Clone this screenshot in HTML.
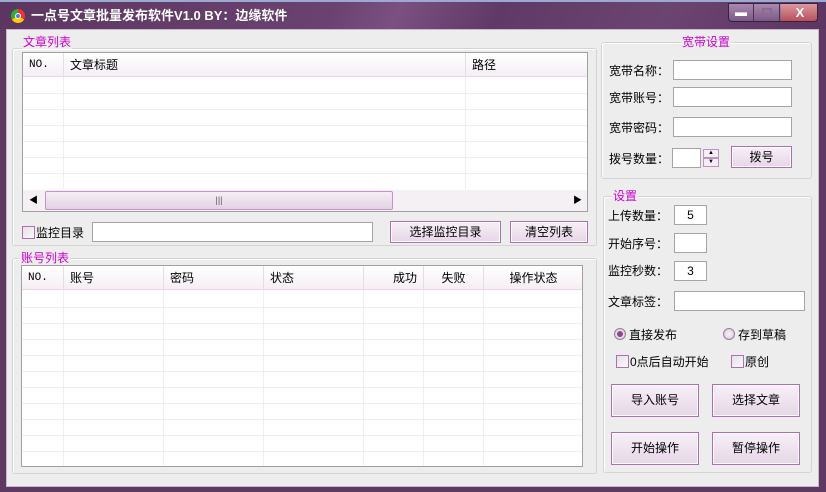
<!DOCTYPE html>
<html><head><meta charset="utf-8"><style>
*{box-sizing:border-box;margin:0;padding:0}
body{width:826px;height:492px;overflow:hidden;background:#5e3a62;font-family:"Liberation Sans","Noto Sans CJK SC","WenQuanYi Zen Hei",sans-serif;font-size:12px;color:#000;position:relative}
.a{position:absolute}
.title{left:0;top:0;width:826px;height:29px;background:linear-gradient(115deg,#5c3660 0%,#6a4270 40%,#7a5080 48%,#603a66 60%,#6b4570 80%,#5c3660 100%);border-top:2px solid #9aaad0}
.client{left:6px;top:29px;width:813px;height:458px;background:#ededed;border:1px solid #c9b7cc}
.grp{position:absolute;border:1px solid #d4d4d4;border-radius:3px;box-shadow:inset 1px 1px 0 #fff}
.lbl{position:absolute;color:#d000d0;background:#ededed;padding:0 1px;font-size:12px;line-height:14px}
.inp{position:absolute;background:#fff;border:1px solid #a5a5a5;text-align:center;line-height:18px}
.btn{position:absolute;border:1px solid #b070b0;background:linear-gradient(#f7f0f7,#e6d6e6);text-align:center;box-shadow:inset 0 0 0 1px #fff;font-size:12px}
.list{position:absolute;background:#fff;border:1px solid #a0a0a0;overflow:hidden}
.hd{position:absolute;top:0;height:24px;line-height:24px;background:linear-gradient(#fff,#f5eff5);border-right:1px solid #e6dce6;border-bottom:1px solid #ecd6ec;padding-left:6px;font-size:12px}
.vl{position:absolute;width:1px;background:#efefef}
.hl{position:absolute;height:1px;background:#efefef;left:0;right:0}
.t{position:absolute;font-size:12px;line-height:14px;white-space:nowrap}
.cb{position:absolute;width:13px;height:13px;border:1px solid #b070b0;background:linear-gradient(135deg,#e6e0e6,#fafafa)}
.rd{position:absolute;width:12px;height:12px;border-radius:50%;border:1px solid #9a7a9a;background:radial-gradient(#f8f0f8,#d8c8d8)}
</style></head><body>
<div class="a title">
 <div class="a" style="left:11px;top:7px;width:14px;height:14px;border-radius:50%;background:conic-gradient(#e33 0 120deg,#fc0 120deg 240deg,#3a3 240deg);"><div style="margin:4px;width:6px;height:6px;border-radius:50%;background:#4a7ee0;border:1px solid #fff"></div></div>
 <div class="a" style="left:31px;top:5px;color:#fff;font-weight:bold;font-size:13px;line-height:18px">一点号文章批量发布软件V1.0 BY：边缘软件</div>
 <div class="a" style="left:728px;top:1px;width:90px;height:19px;border:1px solid #3a2040;border-radius:0 0 4px 4px;background:linear-gradient(#a889b0,#7a5a85);overflow:hidden">
  <div class="a" style="left:0;top:0;width:25px;height:18px;border-right:1px solid #4a3050;color:#fff;text-align:center;font-weight:bold;line-height:16px">▬</div>
  <div class="a" style="left:26px;top:0;width:25px;height:18px;border-right:1px solid #4a3050;"><div style="margin:4px 7px;width:10px;height:9px;border:2px solid #8c6a94"></div></div>
  <div class="a" style="left:52px;top:0;width:38px;height:18px;background:linear-gradient(#d89aa0,#b84a58);color:#fff;text-align:center;font-weight:bold;line-height:17px;font-size:13px">X</div>
 </div>
</div>
<div class="a client"></div>

<div class="grp" style="left:12px;top:48px;width:585px;height:198px"></div>
<div class="lbl" style="left:22px;top:35px">文章列表</div>
<div class="list" style="left:22px;top:52px;width:566px;height:160px">
 <div class="hd" style="left:0;width:41px;font-family:'Liberation Mono',monospace;font-size:11px">NO.</div>
 <div class="hd" style="left:41px;width:402px">文章标题</div>
 <div class="hd" style="left:443px;width:123px;border-right:none">路径</div>
 <div class="vl" style="left:40px;top:24px;height:112px"></div>
 <div class="vl" style="left:442px;top:24px;height:112px"></div>
 <div class="hl" style="top:40px"></div><div class="hl" style="top:56px"></div><div class="hl" style="top:72px"></div><div class="hl" style="top:88px"></div><div class="hl" style="top:104px"></div><div class="hl" style="top:120px"></div>
 <div class="a" style="left:0;top:137px;width:564px;height:21px;background:#f4f0f4">
  <div class="t" style="left:6px;top:3px;font-size:9px">◀</div>
  <div class="a" style="left:22px;top:1px;width:348px;height:19px;border:1px solid #c890c8;border-radius:2px;background:linear-gradient(#f6eef6,#e2d2e2);text-align:center;line-height:17px;font-size:9px;color:#705070">|||</div>
  <div class="t" style="left:550px;top:3px;font-size:9px">▶</div>
 </div>
</div>
<div class="cb" style="left:22px;top:226px"></div>
<div class="t" style="left:36px;top:226px">监控目录</div>
<div class="inp" style="left:92px;top:222px;width:281px;height:20px"></div>
<div class="btn" style="left:390px;top:221px;width:111px;height:22px;line-height:20px">选择监控目录</div>
<div class="btn" style="left:510px;top:221px;width:78px;height:22px;line-height:20px">清空列表</div>

<div class="grp" style="left:12px;top:258px;width:585px;height:216px"></div>
<div class="lbl" style="left:20px;top:251px">账号列表</div>
<div class="list" style="left:21px;top:265px;width:562px;height:202px">
 <div class="hd" style="left:0;width:42px;font-family:'Liberation Mono',monospace;font-size:11px">NO.</div>
 <div class="hd" style="left:42px;width:100px">账号</div>
 <div class="hd" style="left:142px;width:100px">密码</div>
 <div class="hd" style="left:242px;width:100px">状态</div>
 <div class="hd" style="left:342px;width:60px;text-align:right;padding-right:6px">成功</div>
 <div class="hd" style="left:402px;width:60px;text-align:center;padding:0">失败</div>
 <div class="hd" style="left:462px;width:100px;text-align:center;padding:0">操作状态</div>
 <div class="vl" style="left:41px;top:24px;height:178px"></div>
 <div class="vl" style="left:141px;top:24px;height:178px"></div>
 <div class="vl" style="left:241px;top:24px;height:178px"></div>
 <div class="vl" style="left:341px;top:24px;height:178px"></div>
 <div class="vl" style="left:401px;top:24px;height:178px"></div>
 <div class="vl" style="left:461px;top:24px;height:178px"></div>
 <div class="vl" style="left:561px;top:24px;height:178px"></div>
 <div class="hl" style="top:41px"></div><div class="hl" style="top:57px"></div><div class="hl" style="top:73px"></div><div class="hl" style="top:89px"></div><div class="hl" style="top:105px"></div><div class="hl" style="top:121px"></div><div class="hl" style="top:137px"></div><div class="hl" style="top:153px"></div><div class="hl" style="top:169px"></div><div class="hl" style="top:185px"></div>
</div>

<div class="grp" style="left:601px;top:42px;width:211px;height:137px"></div>
<div class="lbl" style="left:681px;top:35px">宽带设置</div>
<div class="t" style="left:609px;top:64px">宽带名称：</div>
<div class="inp" style="left:673px;top:60px;width:119px;height:20px"></div>
<div class="t" style="left:609px;top:91px">宽带账号：</div>
<div class="inp" style="left:673px;top:87px;width:119px;height:20px"></div>
<div class="t" style="left:609px;top:121px">宽带密码：</div>
<div class="inp" style="left:673px;top:117px;width:119px;height:20px"></div>
<div class="t" style="left:609px;top:152px">拨号数量：</div>
<div class="inp" style="left:672px;top:148px;width:29px;height:20px"></div>
<div class="a" style="left:703px;top:149px;width:16px;height:9px;border:1px solid #c090c0;font-size:6px;text-align:center;line-height:7px;background:#f6eef6">▲</div>
<div class="a" style="left:703px;top:158px;width:16px;height:9px;border:1px solid #c090c0;font-size:6px;text-align:center;line-height:7px;background:#f6eef6">▼</div>
<div class="btn" style="left:731px;top:146px;width:61px;height:22px;line-height:20px">拨号</div>

<div class="grp" style="left:603px;top:196px;width:209px;height:277px"></div>
<div class="lbl" style="left:612px;top:189px">设置</div>
<div class="t" style="left:608px;top:209px">上传数量：</div>
<div class="inp" style="left:674px;top:205px;width:33px;height:20px">5</div>
<div class="t" style="left:608px;top:237px">开始序号：</div>
<div class="inp" style="left:674px;top:233px;width:33px;height:20px"></div>
<div class="t" style="left:608px;top:264px">监控秒数：</div>
<div class="inp" style="left:674px;top:261px;width:33px;height:20px">3</div>
<div class="t" style="left:608px;top:295px">文章标签：</div>
<div class="inp" style="left:674px;top:291px;width:131px;height:20px"></div>
<div class="rd" style="left:614px;top:328px"><div style="margin:2px;width:6px;height:6px;border-radius:50%;background:#8a4a8a"></div></div>
<div class="t" style="left:629px;top:328px">直接发布</div>
<div class="rd" style="left:723px;top:328px"></div>
<div class="t" style="left:738px;top:328px">存到草稿</div>
<div class="cb" style="left:616px;top:355px"></div>
<div class="t" style="left:630px;top:355px">0点后自动开始</div>
<div class="cb" style="left:731px;top:355px"></div>
<div class="t" style="left:745px;top:355px">原创</div>
<div class="btn" style="left:611px;top:384px;width:88px;height:33px;line-height:31px">导入账号</div>
<div class="btn" style="left:712px;top:384px;width:88px;height:33px;line-height:31px">选择文章</div>
<div class="btn" style="left:611px;top:432px;width:88px;height:33px;line-height:31px">开始操作</div>
<div class="btn" style="left:712px;top:432px;width:88px;height:33px;line-height:31px">暂停操作</div>
</body></html>
